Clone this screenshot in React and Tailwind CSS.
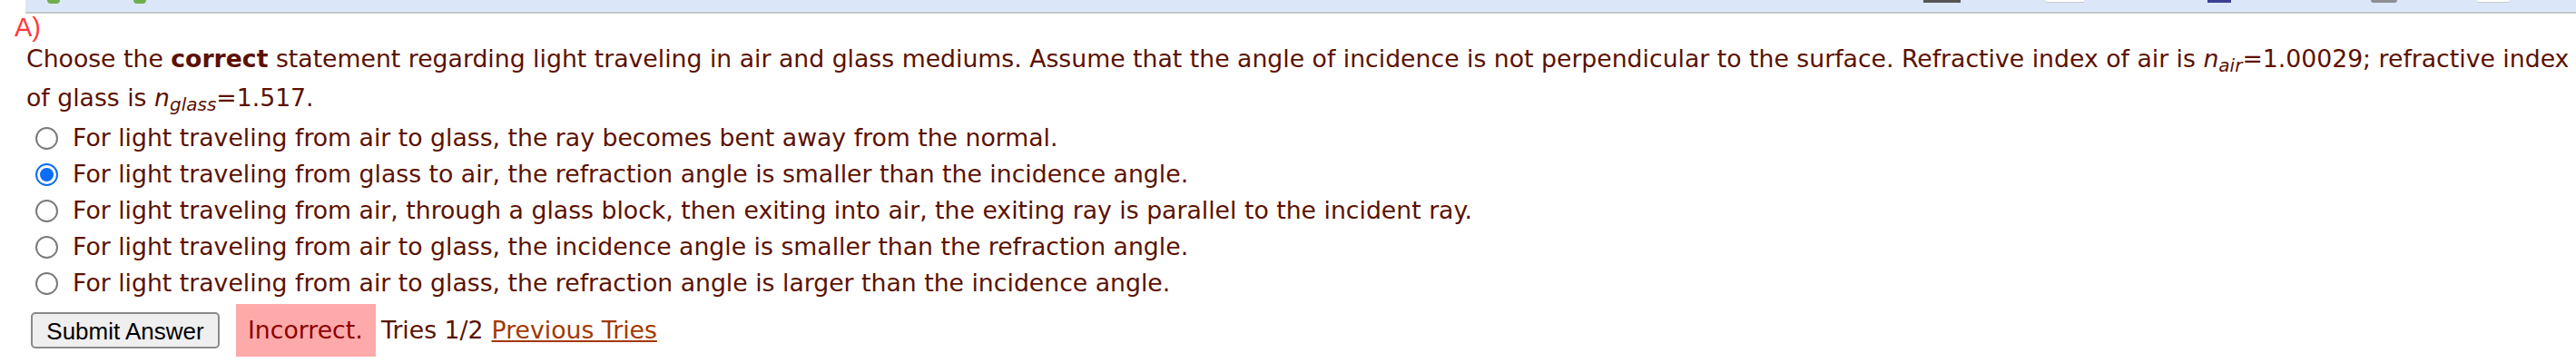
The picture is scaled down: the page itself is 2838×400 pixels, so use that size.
import React from 'react';

const options = [
  'For light traveling from air to glass, the ray becomes bent away from the normal.',
  'For light traveling from glass to air, the refraction angle is smaller than the incidence angle.',
  'For light traveling from air, through a glass block, then exiting into air, the exiting ray is parallel to the incident ray.',
  'For light traveling from air to glass, the incidence angle is smaller than the refraction angle.',
  'For light traveling from air to glass, the refraction angle is larger than the incidence angle.',
];

const Radio = ({ checked }) =>
  checked ? (
    <span className="w-[25px] h-[25px] rounded-full border-[2px] border-[#0b6cf5] bg-white flex items-center justify-center shrink-0">
      <span className="w-[15px] h-[15px] rounded-full bg-[#0b6cf5]"></span>
    </span>
  ) : (
    <span className="w-[25px] h-[25px] rounded-full border-[2px] border-[#7a7a7a] bg-white shrink-0"></span>
  );

const App = () => {
  return (
    <div className="w-[2838px] h-[400px] bg-white overflow-hidden font-['DejaVu_Sans',Verdana,sans-serif] text-[#5c1100]">
      {/* toolbar strip, only its bottom edge is in view */}
      <div className="ml-[28px] h-[15px] bg-[#dbe7f8] border-b-2 border-[#c4c7cb] flex items-start overflow-hidden">
        <span className="ml-[24px] w-[14px] h-[4px] rounded-b-full bg-[#6fae4c]"></span>
        <span className="ml-[81px] w-[14px] h-[4px] rounded-b-full bg-[#6fae4c]"></span>
        <span className="ml-[1958px] w-[41px] h-[3px] bg-[#555]"></span>
        <span className="ml-[94px] w-[42px] h-[3px] bg-white border-b border-[#c9c9c9]"></span>
        <span className="ml-[136px] w-[26px] h-[3px] bg-[#3b3f94]"></span>
        <span className="ml-[154px] w-[29px] h-[3px] rounded-b-full bg-[#8d8f94]"></span>
        <span className="ml-[88px] w-[35px] h-[3px] bg-white border-b border-[#c9c9c9]"></span>
      </div>

      <div className="pl-[16px] text-[#ff3a3a] text-[29px] leading-[30px] font-['Liberation_Sans',Arial,sans-serif]">A)</div>

      <div className="pl-[29px] pr-[6px] text-[26.7px] leading-[43px] -mt-[2px]">
        <p>
          Choose the <b>correct</b> statement regarding light traveling in air and glass mediums. Assume that the
          angle of incidence is not perpendicular to the surface. Refractive index of air is{' '}
          <i>n</i>
          <sub className="italic">air</sub>=1.00029; refractive index of glass is <i>n</i>
          <sub className="italic">glass</sub>=1.517.
        </p>
      </div>

      <div className="pl-[39px] text-[26.7px] mt-[3px]">
        {options.map((text, i) => (
          <label key={i} className="flex items-center gap-[16px] h-[40px]">
            <Radio checked={i === 1} />
            <span>{text}</span>
          </label>
        ))}
      </div>

      <div className="pl-[34px] flex items-center mt-[3px] text-[26.7px]">
        <button className="h-[40px] w-[208px] rounded-[5px] border-[2px] border-[#8a8a8a] bg-[#efefef] text-black font-['Liberation_Sans',Arial,sans-serif] text-[26px]">
          Submit Answer
        </button>
        <span className="ml-[18px] h-[58px] w-[154px] pl-[13px] flex items-center bg-[#ffaaaa] text-[#8c0000]">Incorrect.</span>
        <span className="ml-[6px]">Tries 1/2</span>
        <a href="#" className="ml-[9px] text-[#a33800] underline">Previous Tries</a>
      </div>
    </div>
  );
};

export default App;
